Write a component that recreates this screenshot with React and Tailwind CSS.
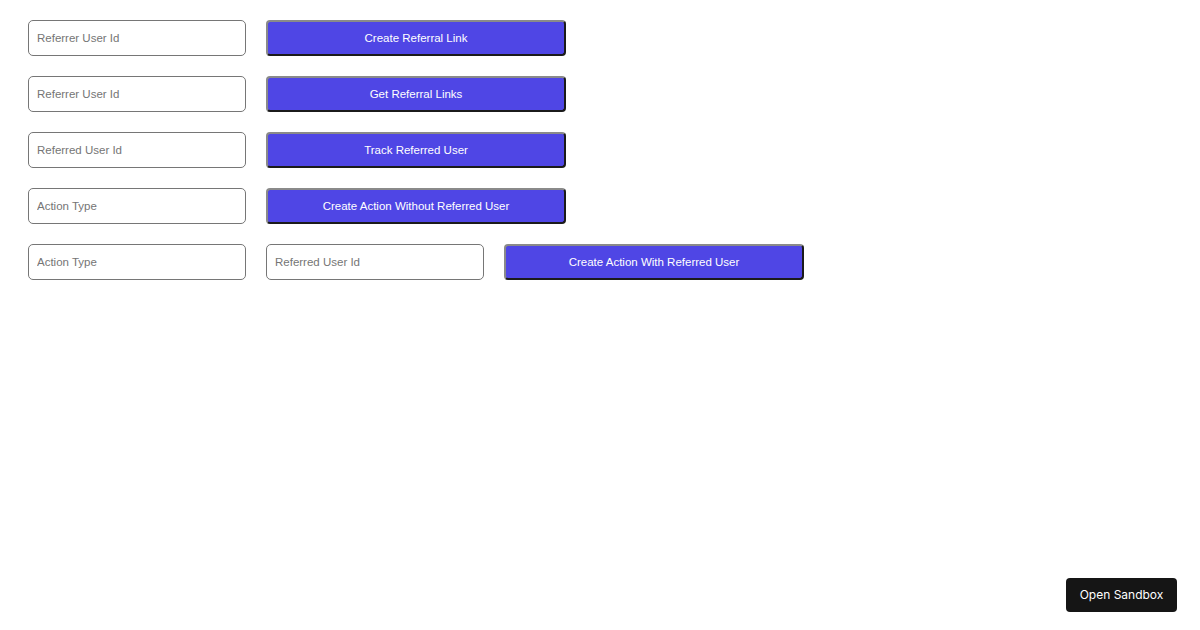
import React from "react";

const Field = ({ placeholder }) => (
  <input
    placeholder={placeholder}
    className="w-[218px] h-9 rounded-[5px] border border-[#767676] bg-white px-2 text-[11.5px] text-gray-900 placeholder:text-[#757575] outline-none"
  />
);

const ActionButton = ({ label }) => (
  <button className="w-[300px] h-9 pt-px rounded-[4px] border-2 border-t-[#8a8a8a] border-l-[#8a8a8a] border-b-[#1b1b1b] border-r-[#1b1b1b] bg-[#4f46e5] text-[11.5px] text-white">
    {label}
  </button>
);

export default function App() {
  return (
    <div className="relative h-[630px] w-full bg-white font-['Liberation_Sans',Arial,sans-serif]">
      <div className="flex flex-col gap-5 px-7 py-5">
        <div className="flex gap-5">
          <Field placeholder="Referrer User Id" />
          <ActionButton label="Create Referral Link" />
        </div>
        <div className="flex gap-5">
          <Field placeholder="Referrer User Id" />
          <ActionButton label="Get Referral Links" />
        </div>
        <div className="flex gap-5">
          <Field placeholder="Referred User Id" />
          <ActionButton label="Track Referred User" />
        </div>
        <div className="flex gap-5">
          <Field placeholder="Action Type" />
          <ActionButton label="Create Action Without Referred User" />
        </div>
        <div className="flex gap-5">
          <Field placeholder="Action Type" />
          <Field placeholder="Referred User Id" />
          <ActionButton label="Create Action With Referred User" />
        </div>
      </div>
      <button className="absolute bottom-[18px] right-[23px] h-[34px] w-[111px] rounded-[4px] bg-[#151515] text-[12px] text-white font-['Inter',sans-serif]">
        Open Sandbox
      </button>
    </div>
  );
}
